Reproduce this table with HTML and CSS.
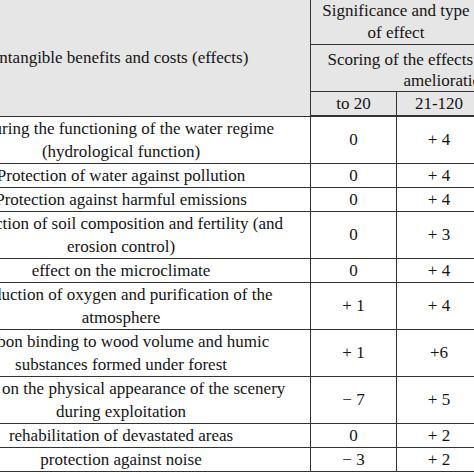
FILE: index.html
```html
<!DOCTYPE html>
<html lang="en">
<head>
<meta charset="utf-8">
<title>Intangible benefits and costs</title>
<link rel="stylesheet" href="styles.css">
</head>
<body>
<div class="crop">
<table class="effects">
  <colgroup>
    <col class="c-label">
    <col class="c-num">
    <col class="c-num2">
    <col class="c-extra">
  </colgroup>
  <thead>
    <tr class="h1">
      <th rowspan="3" class="label-head">Intangible benefits and costs (effects)</th>
      <th colspan="2">Significance and type<br>of effect</th>
      <th></th>
    </tr>
    <tr class="h2">
      <th colspan="3">Scoring of the effects by the age of<br>amelioration</th>
    </tr>
    <tr class="h3">
      <th>to 20</th>
      <th>21-120</th>
      <th>over 120</th>
    </tr>
  </thead>
  <tbody>
    <tr><td class="lbl">Ensuring the functioning of the water regime<br>(hydrological function)</td><td>0</td><td>+ 4</td><td></td></tr>
    <tr><td class="lbl">Protection of water against pollution</td><td>0</td><td>+ 4</td><td></td></tr>
    <tr><td class="lbl">Protection against harmful emissions</td><td>0</td><td>+ 4</td><td></td></tr>
    <tr><td class="lbl">Protection of soil composition and fertility (and<br>erosion control)</td><td>0</td><td>+ 3</td><td></td></tr>
    <tr><td class="lbl">effect on the microclimate</td><td>0</td><td>+ 4</td><td></td></tr>
    <tr><td class="lbl">Production of oxygen and purification of the<br>atmosphere</td><td>+ 1</td><td>+ 4</td><td></td></tr>
    <tr><td class="lbl">Carbon binding to wood volume and humic<br>substances formed under forest</td><td>+ 1</td><td>+6</td><td></td></tr>
    <tr><td class="lbl">Effect on the physical appearance of the scenery<br>during exploitation</td><td>− 7</td><td>+ 5</td><td></td></tr>
    <tr><td class="lbl">rehabilitation of devastated areas</td><td>0</td><td>+ 2</td><td></td></tr>
    <tr><td class="lbl">protection against noise</td><td>− 3</td><td>+ 2</td><td></td></tr>
  </tbody>
</table>
</div>
</body>
</html>
```
FILE: styles.css
```css
html, body {
  margin: 0;
  padding: 0;
  background: #ffffff;
}
.crop {
  width: 474px;
  height: 474px;
  overflow: hidden;
}
.effects {
  border-collapse: collapse;
  table-layout: fixed;
  width: 651px;
  margin-left: -69px;
  margin-top: -1px;
  font-family: "Liberation Serif", "Times New Roman", serif;
  font-size: 17px;
  color: #141414;
}
.c-label { width: 379px; }
.c-num { width: 86px; }
.c-num2 { width: 85px; }
.c-extra { width: 101px; }
.effects th,
.effects td {
  border: 1px solid #333333;
  padding: 0 2px;
  text-align: center;
  vertical-align: middle;
  line-height: 23px;
  font-weight: normal;
}
.effects thead th {
  background: #e6e6e6;
}
.h1 th { line-height: 22px; }
.h2 th {
  line-height: 21px;
  padding-top: 4px;
}
.h3 th { border-bottom: 2px solid #333333; }
.label-head { border-bottom: 2px solid #333333; }
.effects td { background: #ffffff; }
```
